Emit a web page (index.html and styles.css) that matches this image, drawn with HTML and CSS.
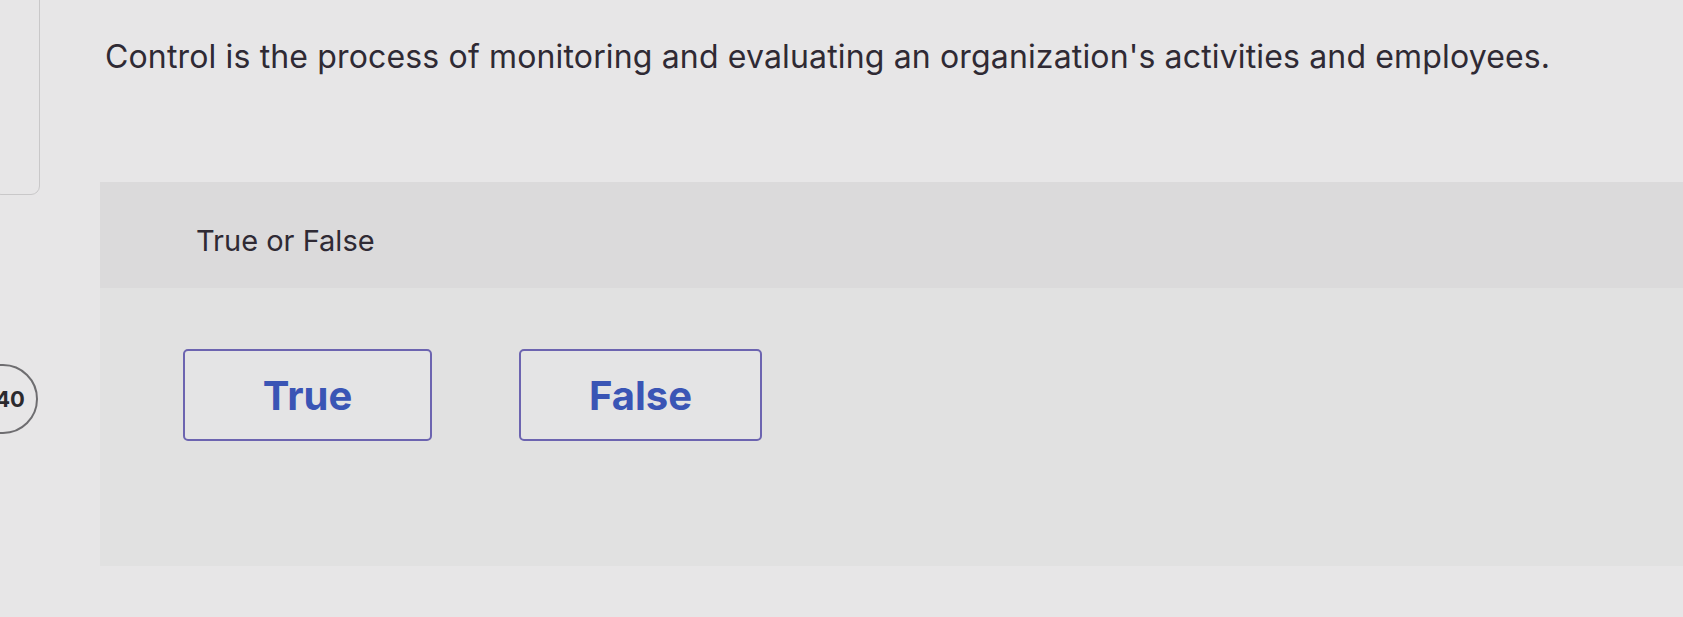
FILE: index.html
```html
<!DOCTYPE html>
<html lang="en">
<head>
<meta charset="utf-8">
<title>True or False</title>
<link rel="stylesheet" href="styles.css">
</head>
<body>
<div class="page">
  <aside class="rail">
    <div class="prev-card"></div>
    <div class="badge"><span>40</span></div>
  </aside>
  <main class="main">
    <p class="question">Control is the process of monitoring and evaluating an organization's activities and employees.</p>
    <section class="panel">
      <div class="panel-head">True or False</div>
      <div class="panel-body">
        <button class="choice choice-true">True</button>
        <button class="choice choice-false">False</button>
      </div>
    </section>
  </main>
</div>
</body>
</html>
```
FILE: styles.css
```css
html, body {
  margin: 0;
  padding: 0;
  height: 100%;
  overflow: hidden;
}
body {
  background: #e7e6e7;
  font-family: Inter, "Liberation Sans", sans-serif;
  color: #2f2a34;
}
.page {
  display: flex;
  align-items: flex-start;
  width: 100%;
}
.rail {
  width: 100px;
  flex: none;
  display: flex;
  flex-direction: column;
}
.prev-card {
  width: 48px;
  height: 205px;
  margin-top: -10px;
  margin-left: -8px;
  border: 1px solid #c9c8c9;
  border-radius: 9px;
  box-sizing: border-box;
}
.badge {
  width: 70px;
  height: 70px;
  margin-top: 169px;
  margin-left: -32px;
  border: 2px solid #6e6d70;
  border-radius: 50%;
  box-sizing: border-box;
  display: flex;
  align-items: center;
  justify-content: center;
}
.badge span {
  font-weight: 700;
  font-size: 22px;
  color: #2c2a2e;
  padding-left: 14px;
}
.main {
  flex: 1;
  min-width: 0;
}
.question {
  margin: 38px 0 0 5px;
  font-size: 32px;
  line-height: 38px;
  white-space: nowrap;
  letter-spacing: 0.15px;
}
.panel {
  margin-top: 106px;
  width: 1600px;
}
.panel-head {
  height: 106px;
  box-sizing: border-box;
  background: #dbdadb;
  padding: 42px 0 0 96px;
  font-size: 29px;
  line-height: 34px;
}
.panel-body {
  height: 278px;
  box-sizing: border-box;
  background: #e1e1e1;
  padding: 61px 0 0 83px;
  display: flex;
  gap: 87px;
  align-items: flex-start;
}
.choice {
  width: 249px;
  height: 92px;
  box-sizing: border-box;
  border: 2px solid #6c64b0;
  border-radius: 5px;
  background: #e4e4e5;
  font-family: Inter, "Liberation Sans", sans-serif;
  font-weight: 700;
  font-size: 40px;
  color: #3a55b5;
  padding: 0;
  cursor: pointer;
}
.choice-false {
  width: 243px;
}
```
